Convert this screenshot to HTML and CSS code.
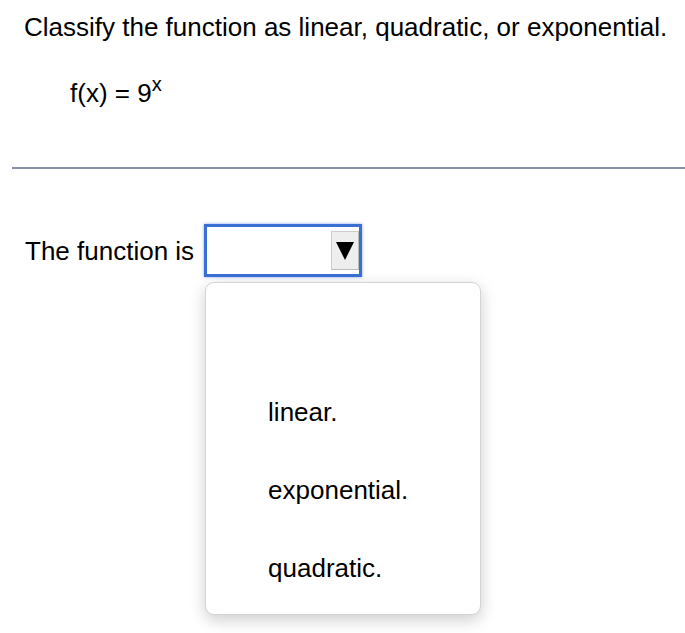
FILE: index.html
```
<!doctype html>
<html lang="en">

<head>
    <meta charset="utf-8">
    <title>Classify the function</title>
    <link rel="stylesheet" href="styles.css">
</head>

<body>

    <div class="question">
        <p class="prompt">Classify the function as linear, quadratic, or exponential.</p>
        <p class="formula">f(x) = 9<sup>x</sup></p>
    </div>

    <hr class="divider">

    <div class="answer">
        <span class="label">The function is</span>
        <div class="picker">
            <div class="select">
                <span class="arrow"></span>
            </div>
            <ul class="menu">
                <li></li>
                <li>linear.</li>
                <li>exponential.</li>
                <li>quadratic.</li>
            </ul>
        </div>
    </div>

</body>

</html>
```

FILE: styles.css
```
body {
    font-family: "Liberation Sans", Arial, Helvetica, sans-serif;
    margin: 0;
    padding: 0;
    min-height: 100vh;
    background: #fff;
    color: #000;
}

.question {
    padding: 12px 0 0 24px;
}

.prompt {
    font-size: 26px;
    line-height: 30px;
    margin: 0;
}

.formula {
    font-size: 26px;
    line-height: 30px;
    margin: 36px 0 0 46px;
}

.formula sup {
    font-size: 20px;
    line-height: 0;
    vertical-align: 0;
    position: relative;
    top: -11px;
}

.divider {
    border: 0;
    height: 2px;
    background: #8a90a6;
    margin: 59px 0 0 12px;
}

.answer {
    display: flex;
    align-items: flex-start;
    gap: 10px;
    padding: 55px 0 0 25px;
}

.label {
    font-size: 26px;
    line-height: 30px;
    margin-top: 12px;
}

.picker {
    display: flex;
    flex-direction: column;
}

.select {
    box-sizing: border-box;
    width: 158px;
    height: 53px;
    border: 3px solid #3a6fd4;
    box-shadow: 0 0 3px rgba(58, 111, 212, .6);
    background: #fff;
    display: flex;
    justify-content: flex-end;
    align-items: center;
}

.arrow {
    box-sizing: border-box;
    width: 28px;
    height: 39px;
    background: #eee;
    border: 1px solid #bbb;
    border-top-color: #ccc;
    border-left-color: #ccc;
    display: flex;
    align-items: center;
    justify-content: center;
}

.arrow::before {
    content: "";
    border-left: 9px solid transparent;
    border-right: 9px solid transparent;
    border-top: 18px solid #000;
}

.menu {
    box-sizing: border-box;
    width: 276px;
    height: 333px;
    margin: 5px 0 0 1px;
    padding: 12px 0 0 62px;
    list-style: none;
    background: #fff;
    border: 1px solid #d4d4d4;
    border-radius: 9px;
    box-shadow: 0 5px 16px rgba(0, 0, 0, .2);
}

.menu li {
    height: 78px;
    display: flex;
    align-items: center;
    font-size: 26px;
}
```
